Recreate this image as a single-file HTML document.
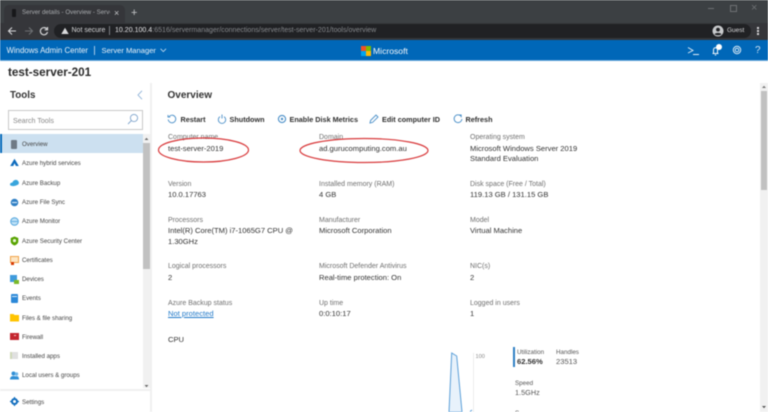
<!DOCTYPE html>
<html lang="en"><head><meta charset="utf-8"><title>Server details - Overview</title>
<style>
*{box-sizing:border-box}
html,body{margin:0;padding:0;width:768px;height:412px;overflow:hidden;background:#fff}
body{font-family:"Liberation Sans",sans-serif;color:#333;position:relative}
#w{position:absolute;left:0;top:0;width:768px;height:412px;overflow:hidden;filter:blur(.45px)}
.a{position:absolute;white-space:nowrap;line-height:12px}
.l{font-size:7px;color:#6f6f6f;margin-top:1px}
.v{font-size:7.6px;color:#333}
.s{font-size:6.15px;color:#444;left:22px;margin-top:.5px}
.t{font-size:7.25px;font-weight:bold;color:#2f2f2f;margin-top:1px}
.m{font-size:6.25px;color:#555}
svg{position:absolute;overflow:visible}
</style></head><body><div id="w">
<!-- chrome -->
<div class="a" style="left:0;top:0;width:768px;height:23px;background:#3c4043"></div>
<div class="a" style="left:4px;top:5px;width:121px;height:18px;background:#35363a;border-radius:5px 5px 0 0"></div>
<div class="a" style="left:12px;top:9px;width:4px;height:8px;background:#17181a;border-radius:1px"></div>
<div class="a" style="left:22px;top:7px;font-size:6.2px;color:#a8abae;width:88px;overflow:hidden">Server details - Overview - Server</div>
<div class="a" style="left:114px;top:7px;font-size:9px;color:#c6c8ca">×</div>
<div class="a" style="left:131px;top:7px;font-size:11px;color:#c6c8ca">+</div>
<div class="a" style="left:708px;top:8px;width:6px;height:1px;background:#6d7073"></div>
<div class="a" style="left:730px;top:5px;width:7px;height:7px;border:1px solid #6d7073"></div>
<div class="a" style="left:751px;top:2px;font-size:11px;color:#6d7073">×</div>
<div class="a" style="left:0;top:23px;width:768px;height:17px;background:#35363a"></div>
<svg style="left:7px;top:26px" width="10" height="10" fill="none" stroke="#d5d6d8" stroke-width="1.1"><path d="M1.5 5H9M5 1.5L1.5 5 5 8.5"/></svg>
<svg style="left:24px;top:26px" width="10" height="10" fill="none" stroke="#6d7073" stroke-width="1.1"><path d="M1 5H8.5M5 1.5L8.5 5 5 8.5"/></svg>
<svg style="left:39px;top:26px" width="10" height="10" fill="none" stroke="#d5d6d8" stroke-width="1.2"><path d="M8 3.2A3.6 3.6 0 1 0 8.5 6"/><path d="M8.5 1V3.8H5.7" /></svg>
<div class="a" style="left:54px;top:24px;width:669px;height:14px;background:#202124;border-radius:7px"></div>
<svg style="left:61px;top:27px" width="8" height="8"><path d="M4 .8L7.7 7H.3z" fill="#d8d9db"/></svg>
<div class="a" style="left:71.5px;top:25px;font-size:7px;color:#d5d6d8">Not secure</div>
<div class="a" style="left:109px;top:26px;width:1px;height:9px;background:#7a7c80"></div>
<div class="a" style="left:115px;top:25px;font-size:7.05px;color:#e3e4e6">10.20.100.4<span style="color:#85888c">:6516/servermanager/connections/server/test-server-201/tools/overview</span></div>
<div class="a" style="left:711px;top:24px;width:40px;height:14px;background:#202124;border-radius:7px"></div>
<svg style="left:712px;top:25px" width="12" height="12"><circle cx="6" cy="6" r="5.5" fill="#c8cacc"/><circle cx="6" cy="4.6" r="1.9" fill="#202124"/><path d="M2.6 9.2C3.4 7.4 8.6 7.4 9.4 9.2 8 10.6 4 10.6 2.6 9.2z" fill="#202124"/></svg>
<div class="a" style="left:727px;top:25px;font-size:6.5px;color:#d5d6d8">Guest</div>
<div class="a" style="left:757px;top:27px;width:2px;height:2px;background:#d5d6d8;box-shadow:0 3px #d5d6d8,0 6px #d5d6d8"></div>
<!-- header -->
<div class="a" style="left:0;top:40px;width:768px;height:20.5px;background:#0067b8;border-bottom:1px solid #6aa9db"></div>
<div class="a" style="left:6.5px;top:45px;font-size:7.85px;color:#e6f0f8">Windows Admin Center</div>
<div class="a" style="left:94px;top:46px;width:1px;height:9px;background:#a5c8e6"></div>
<div class="a" style="left:101.5px;top:45px;font-size:7.6px;color:#e6f0f8">Server Manager</div>
<svg style="left:160px;top:48px" width="7" height="5" fill="none" stroke="#cfe2f2" stroke-width=".8"><path d="M.6.8L3.3 3.6 6 .8"/></svg>
<div class="a" style="left:361px;top:46px;width:5px;height:5px;background:#f25022"></div>
<div class="a" style="left:366px;top:46px;width:5px;height:5px;background:#7fba00"></div>
<div class="a" style="left:361px;top:51px;width:5px;height:5px;background:#00a4ef"></div>
<div class="a" style="left:366px;top:51px;width:5px;height:5px;background:#ffb900"></div>
<div class="a" style="left:373px;top:45px;font-size:8.6px;color:#f2f7fb">Microsoft</div>
<svg style="left:687px;top:45px" width="14" height="11" fill="none" stroke="#e3eef7" stroke-width=".9"><path d="M1 2.5L6 5.5 1 8M6 9.5H12"/></svg>
<svg style="left:711px;top:45px" width="12" height="11" fill="none" stroke="#f2f7fb" stroke-width="1"><path d="M1.5 8.5H7.5M2.5 8.5V5C2.5 3.5 3.2 2.8 4.5 2.8S6.5 3.5 6.5 5V8.5M3.8 10H5.2"/></svg>
<div class="a" style="left:716px;top:43.5px;width:6px;height:6px;border-radius:50%;background:#fff"></div>
<svg style="left:732px;top:44.5px" width="10" height="10" fill="none" stroke="#dcebf6" stroke-width="1"><circle cx="5" cy="5" r="3.7"/><circle cx="5" cy="5" r="1.8"/></svg>
<div class="a" style="left:755px;top:44.5px;font-size:10px;color:#cfe2f2">?</div>
<!-- title -->
<div class="a" style="left:8px;top:67px;font-size:11.7px;font-weight:bold;color:#2b2b2b">test-server-201</div>
<!-- sidebar -->
<div class="a" style="left:10px;top:90px;font-size:9.8px;font-weight:bold;color:#333">Tools</div>
<svg style="left:137px;top:90px" width="6" height="10" fill="none" stroke="#8fb2d8" stroke-width=".9"><path d="M5 .8L1 5 5 9.2"/></svg>
<div class="a" style="left:150px;top:83px;width:2px;height:329px;background:#f0f0f0"></div>
<div class="a" style="left:8px;top:110px;width:135px;height:20px;border:1px solid #c9c9c9"></div>
<div class="a" style="left:13px;top:114.5px;font-size:7.1px;color:#888">Search Tools</div>
<svg style="left:127px;top:113px" width="12" height="12" fill="none" stroke="#7fa4cc" stroke-width=".9"><circle cx="7" cy="5" r="3.6"/><path d="M4.4 7.6L1 11"/></svg>
<div class="a" style="left:0;top:134px;width:143px;height:19px;background:#cce0f0"></div>
<div class="a" style="left:0;top:134px;width:2px;height:19px;background:#0067b8"></div>
<div class="a" style="left:143px;top:134px;width:7px;height:254px;background:#f1f1f1"></div>
<div class="a" style="left:143px;top:143px;width:7px;height:126px;background:#c1c1c1"></div>
<svg style="left:144px;top:137px" width="5" height="4"><path d="M2.5.8L4.4 3H.6z" fill="#666"/></svg>
<svg style="left:144px;top:384px" width="5" height="4"><path d="M.6 1H4.4L2.5 3.2z" fill="#666"/></svg>

<div class="a" style="left:11px;top:140px;width:6px;height:9px;background:#6f7a85;border-radius:1px"></div>
<div class="a s" style="top:138.5px">Overview</div>
<svg style="left:10px;top:158px" width="9" height="9"><path d="M4.5.8L8.8 8H6L4.4 5.2 3.3 8H.2z" fill="#0f6cbd"/></svg>
<div class="a s" style="top:157.5px">Azure hybrid services</div>
<svg style="left:10px;top:179px" width="9" height="8"><path d="M0 5.5C0 4 1.5 3.5 2.5 3.5 3 1 7 0 8 2 9.5 3 9 6 7 6 5 7.5 0 7.5 0 5.5z" fill="#39a5dc"/></svg>
<div class="a s" style="top:177px">Azure Backup</div>
<svg style="left:10px;top:198px" width="9" height="9"><circle cx="4.5" cy="4.5" r="3.8" fill="#2f7fc4"/><path d="M2 4.5H7" stroke="#cfe6f7" stroke-width="1.2"/></svg>
<div class="a s" style="top:196px">Azure File Sync</div>
<svg style="left:10px;top:217px" width="9" height="9"><circle cx="4.5" cy="4.5" r="3.8" fill="#bfe1f6" stroke="#4fa3dc"/><path d="M1.5 4.5H7.5" stroke="#4fa3dc" stroke-width=".8"/></svg>
<div class="a s" style="top:215.5px">Azure Monitor</div>
<svg style="left:10px;top:236px" width="9" height="10"><path d="M4.5.5L8.3 2V5.5C8.3 7.5 6 9 4.5 9.5 3 9 .7 7.5.7 5.5V2z" fill="#57a300"/><circle cx="4.5" cy="4.6" r="1.6" fill="#e9f5d8"/></svg>
<div class="a s" style="top:235px">Azure Security Center</div>
<div class="a" style="left:10px;top:256px;width:9px;height:7px;background:#fde6c4;border:1px solid #f2a34a"></div>
<div class="a" style="left:11px;top:262px;width:2.5px;height:2.5px;background:#d83b01"></div>
<div class="a s" style="top:254px">Certificates</div>
<div class="a" style="left:10px;top:275px;width:7px;height:7px;background:#3f9bdc"></div>
<div class="a" style="left:14px;top:280px;width:5px;height:4px;background:#7ab928"></div>
<div class="a s" style="top:273px">Devices</div>
<div class="a" style="left:11px;top:294px;width:7px;height:9px;background:#2b88d8;border-radius:1px"></div>
<div class="a" style="left:12px;top:296px;width:5px;height:1px;background:#d5e8f7"></div>
<div class="a s" style="top:292.5px">Events</div>
<svg style="left:10px;top:314px" width="9" height="8"><path d="M0 0H3.5L4.5 1H9V7.5H0z" fill="#ffc400"/></svg>
<div class="a s" style="top:312px">Files &amp; file sharing</div>
<div class="a" style="left:10px;top:333px;width:9px;height:7px;background:#c4262e"></div>
<div class="a" style="left:14px;top:335px;width:2px;height:1px;background:#f3c0c2"></div>
<div class="a s" style="top:331px">Firewall</div>
<div class="a" style="left:10px;top:352px;width:8px;height:7px;background:#e0e0e0;border-left:2px solid #cfd8b8"></div>
<div class="a s" style="top:350.5px">Installed apps</div>
<svg style="left:10px;top:371px" width="9" height="9"><circle cx="3.5" cy="2.5" r="2" fill="#2f8fd6"/><circle cx="6.5" cy="3" r="1.7" fill="#6fb6e8"/><path d="M0 8.5C0 5.5 2 5 3.5 5S7 5.5 7 8.5zM5 5.2H7.5C8.5 5.5 9 7 9 8.5H7" fill="#2f8fd6"/></svg>
<div class="a s" style="top:369.5px">Local users &amp; groups</div>
<div class="a" style="left:0;top:389px;width:150px;height:2px;background:#f0f0f0"></div>
<svg style="left:10px;top:397px" width="9" height="9" fill="none" stroke="#0f6cbd"><circle cx="4.5" cy="4.5" r="2.5" stroke-width="2"/><path d="M4.5 0V1.5M4.5 7.5V9M0 4.5H1.5M7.5 4.5H9" stroke-width="1.2"/></svg>
<div class="a s" style="top:396.5px">Settings</div>
<!-- main -->
<div class="a" style="left:167.5px;top:90px;font-size:10px;font-weight:bold;color:#333">Overview</div>
<svg style="left:167px;top:114px" width="10" height="10" fill="none" stroke="#4a8fc8" stroke-width=".9"><path d="M2.2 2.4A3.8 3.8 0 1 1 1.2 5.5"/><path d="M1 1V3H3.2"/></svg>
<div class="a t" style="left:180.5px;top:113px">Restart</div>
<svg style="left:217px;top:114px" width="10" height="10" fill="none" stroke="#4a8fc8" stroke-width=".9"><path d="M3 2.6A3.7 3.7 0 1 0 7 2.6M5 .5V4.5"/></svg>
<div class="a t" style="left:229.5px;top:113px">Shutdown</div>
<svg style="left:277px;top:114px" width="10" height="10" fill="none" stroke="#4a8fc8"><circle cx="5" cy="5" r="3.6" stroke-width="1.1"/><circle cx="5" cy="5" r="1.2" fill="#4a8fc8" stroke="none"/></svg>
<div class="a t" style="left:289.5px;top:113px">Enable Disk Metrics</div>
<svg style="left:369px;top:114px" width="10" height="10" fill="none" stroke="#4a8fc8" stroke-width=".9"><path d="M1 9L1.6 6.4 7 1 9 3 3.6 8.4z"/></svg>
<div class="a t" style="left:382px;top:113px">Edit computer ID</div>
<svg style="left:453px;top:114px" width="10" height="10" fill="none" stroke="#4a8fc8" stroke-width=".9"><path d="M8 2.2A3.9 3.9 0 1 0 8.9 5"/><path d="M5.5 1H8.2V3.4"/></svg>
<div class="a t" style="left:465.5px;top:113px">Refresh</div>

<div class="a l" style="left:168px;top:131px">Computer name</div>
<div class="a v" style="left:168px;top:142.5px">test-server-2019</div>
<div class="a l" style="left:319px;top:131px">Domain</div>
<div class="a v" style="left:319px;top:142.5px">ad.gurucomputing.com.au</div>
<div class="a l" style="left:470px;top:131px">Operating system</div>
<div class="a v" style="left:470px;top:142.5px">Microsoft Windows Server 2019</div>
<div class="a v" style="left:470px;top:152.5px">Standard Evaluation</div>

<div class="a l" style="left:168px;top:177.5px">Version</div>
<div class="a v" style="left:168px;top:189px">10.0.17763</div>
<div class="a l" style="left:319px;top:177.5px">Installed memory (RAM)</div>
<div class="a v" style="left:319px;top:189px">4 GB</div>
<div class="a l" style="left:470px;top:177.5px">Disk space (Free / Total)</div>
<div class="a v" style="left:470px;top:189px">119.13 GB / 131.15 GB</div>

<div class="a l" style="left:168px;top:214px">Processors</div>
<div class="a v" style="left:168px;top:225px">Intel(R) Core(TM) i7-1065G7 CPU @</div>
<div class="a v" style="left:168px;top:235.5px">1.30GHz</div>
<div class="a l" style="left:319px;top:214px">Manufacturer</div>
<div class="a v" style="left:319px;top:225px">Microsoft Corporation</div>
<div class="a l" style="left:470px;top:214px">Model</div>
<div class="a v" style="left:470px;top:225px">Virtual Machine</div>

<div class="a l" style="left:168px;top:260px">Logical processors</div>
<div class="a v" style="left:168px;top:271.5px">2</div>
<div class="a l" style="left:319px;top:260px">Microsoft Defender Antivirus</div>
<div class="a v" style="left:319px;top:271.5px">Real-time protection: On</div>
<div class="a l" style="left:470px;top:260px">NIC(s)</div>
<div class="a v" style="left:470px;top:271.5px">2</div>

<div class="a l" style="left:168px;top:296.5px">Azure Backup status</div>
<div class="a v" style="left:168px;top:308px;color:#1f78c8;text-decoration:underline">Not protected</div>
<div class="a l" style="left:319px;top:296.5px">Up time</div>
<div class="a v" style="left:319px;top:308px">0:0:10:17</div>
<div class="a l" style="left:470px;top:296.5px">Logged in users</div>
<div class="a v" style="left:470px;top:308px">1</div>

<div class="a v" style="left:168px;top:334px">CPU</div>

<!-- chart -->
<svg style="left:440px;top:345px" width="40" height="67"><path d="M9 67L11.7 8 16.7 11 22 67z" fill="#e8f2fb" stroke="#5b9fd8" stroke-width="1"/><path d="M33.5 8V67" stroke="#ececec"/><path d="M30 66.5L32 65" stroke="#5b9fd8"/></svg>
<div class="a" style="left:475.5px;top:351px;font-size:5.6px;color:#888">100</div>
<div class="a" style="left:513px;top:347px;width:2px;height:20px;background:#2f7fc4"></div>
<div class="a m" style="left:517px;top:347px">Utilization</div>
<div class="a" style="left:517px;top:356px;font-size:7.6px;font-weight:bold;color:#333">62.56%</div>
<div class="a m" style="left:556px;top:347px">Handles</div>
<div class="a" style="left:556px;top:356px;font-size:7.6px;color:#555">23513</div>
<div class="a m" style="left:515px;top:377.5px">Speed</div>
<div class="a" style="left:515px;top:387px;font-size:7.3px;color:#555">1.5GHz</div>
<div class="a m" style="left:515px;top:408px">S</div>

<!-- ellipses -->
<svg style="left:0;top:0" width="768" height="412" fill="none" stroke="#d83a3c" stroke-width="1.2"><ellipse cx="203.5" cy="150" rx="45" ry="12"/><ellipse cx="364" cy="150.5" rx="64" ry="12"/></svg>

<!-- main scrollbar -->
<div class="a" style="left:760px;top:83px;width:8px;height:329px;background:#f1f1f1"></div>
<div class="a" style="left:761px;top:91px;width:6px;height:99px;background:#c1c1c1"></div>
<svg style="left:761px;top:85px" width="6" height="4"><path d="M3 .8L5 3H1z" fill="#777"/></svg>
<svg style="left:761px;top:405px" width="6" height="4"><path d="M1 1H5L3 3.2z" fill="#555"/></svg>
</div></body></html>
